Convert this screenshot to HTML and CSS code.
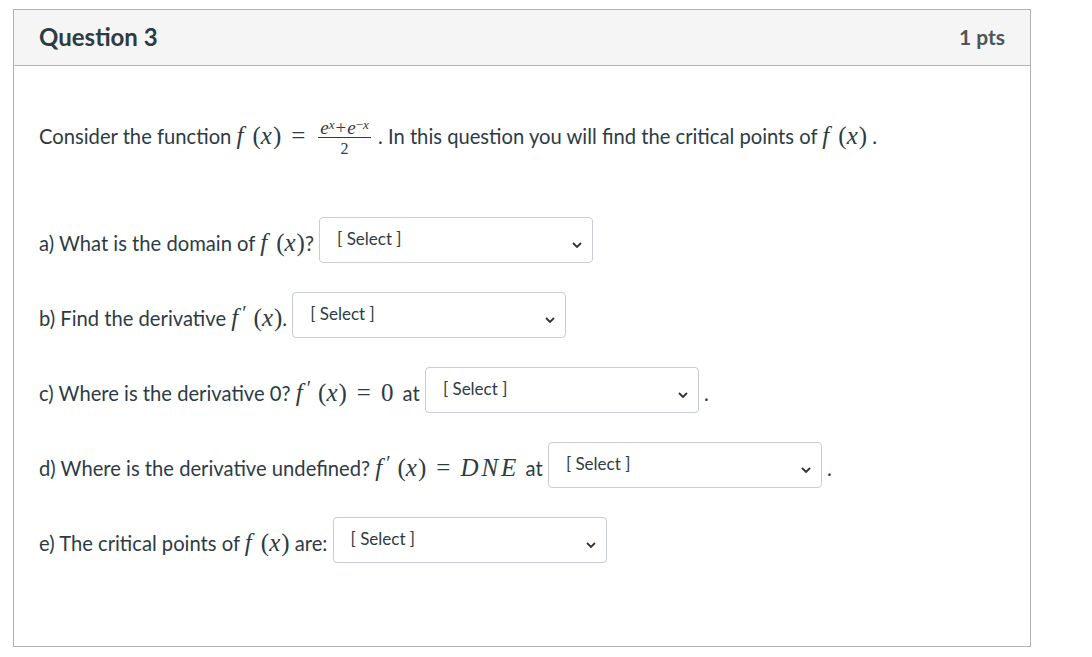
FILE: index.html
```html
<!DOCTYPE html>
<html lang="en">
<head>
  <meta charset="UTF-8" />
  <meta name="viewport" content="width=device-width, initial-scale=1.0"/>
  <title>Question 3</title>
  <link rel="stylesheet" href="styles.css">
</head>
<body>
  <div class="question">
    <div class="question-header">
      <h2 class="question-title">Question 3</h2>
      <span class="question-points">1 pts</span>
    </div>

    <div class="question-body">
      <p class="intro">
        Consider the function <span class="math"><i class="fn">f</i>(<i>x</i>)<span class="rel">=</span></span><span class="frac">
          <span class="num"><i>e</i><sup><i>x</i></sup><span class="op">+</span><i>e</i><sup>−<i>x</i></sup></span>
          <span class="den">2</span>
        </span> . In this question you will find the critical points of <span class="math"><i class="fn">f</i>(<i>x</i>)</span> .
      </p>

      <p class="answer-row">
        a) What is the domain of <span class="math"><i class="fn">f</i>(<i>x</i>)</span>?
        <span class="select"><span class="select-text">[ Select ]</span><svg class="chevron" width="10" height="7" viewBox="0 0 10 7"><polyline points="1,1 5,5 9,1" fill="none" stroke="#333" stroke-width="1.8"/></svg></span>
      </p>

      <p class="answer-row">
        b) Find the derivative <span class="math"><i>f</i><span class="prime">′</span>(<i>x</i>)</span>.
        <span class="select"><span class="select-text">[ Select ]</span><svg class="chevron" width="10" height="7" viewBox="0 0 10 7"><polyline points="1,1 5,5 9,1" fill="none" stroke="#333" stroke-width="1.8"/></svg></span>
      </p>

      <p class="answer-row">
        c) Where is the derivative 0? <span class="math math-gap"><i>f</i><span class="prime">′</span>(<i>x</i>)<span class="rel">=</span>0</span> at
        <span class="select select-end"><span class="select-text">[ Select ]</span><svg class="chevron" width="10" height="7" viewBox="0 0 10 7"><polyline points="1,1 5,5 9,1" fill="none" stroke="#333" stroke-width="1.8"/></svg></span>.
      </p>

      <p class="answer-row">
        d) Where is the derivative undefined? <span class="math"><i>f</i><span class="prime">′</span>(<i>x</i>)<span class="rel">=</span><i class="dne">DNE</i></span> at
        <span class="select select-end"><span class="select-text">[ Select ]</span><svg class="chevron" width="10" height="7" viewBox="0 0 10 7"><polyline points="1,1 5,5 9,1" fill="none" stroke="#333" stroke-width="1.8"/></svg></span>.
      </p>

      <p class="answer-row">
        e) The critical points of <span class="math"><i class="fn">f</i>(<i>x</i>)</span> are:
        <span class="select"><span class="select-text">[ Select ]</span><svg class="chevron" width="10" height="7" viewBox="0 0 10 7"><polyline points="1,1 5,5 9,1" fill="none" stroke="#333" stroke-width="1.8"/></svg></span>
      </p>
    </div>
  </div>
</body>
</html>
```

FILE: styles.css
```css
body {
  margin: 0;
  padding: 9px 0 0 13px;
  background: #fff;
  font-family: Lato, "Noto Sans", sans-serif;
  color: #2d3b45;
}

.question {
  width: 1018px;
  box-sizing: border-box;
  border: 1px solid #b3b3b3;
  padding-bottom: 83px;
}

.question-header {
  display: flex;
  justify-content: space-between;
  align-items: center;
  height: 56px;
  box-sizing: border-box;
  padding: 0 25px 3px;
  background: #f5f5f5;
  border-bottom: 1px solid #b3b3b3;
}

.question-title {
  margin: 0;
  font-size: 24px;
  font-weight: 700;
}

.question-points {
  font-size: 21px;
  font-weight: 700;
  color: #4f5559;
}

.question-body {
  padding: 0 25px;
  font-size: 20.2px;
}

.intro {
  margin: 50px 0 0;
  line-height: 40px;
}

.math {
  font-family: "Liberation Serif", "DejaVu Serif", serif;
  font-size: 25px;
  white-space: nowrap;
}

.math i {
  padding-right: 1px;
}

.math .fn {
  margin-right: 8px;
}

.math-gap {
  margin-right: 4px;
}

.prime {
  display: inline-block;
  margin: 0 7px 0 3px;
  font-size: 20px;
  vertical-align: 6px;
}

.rel {
  margin: 0 10px;
}

.dne {
  letter-spacing: 3px;
}

.frac {
  display: inline-flex;
  flex-direction: column;
  align-items: center;
  vertical-align: middle;
  font-family: "Liberation Serif", serif;
  font-size: 19px;
  line-height: 15px;
  margin: -4px 2px 0 3px;
}

.frac .num {
  padding: 0 2px 2px;
  border-bottom: 1px solid #2d3b45;
}

.frac .op {
  margin: 0 1px;
}

.frac sup {
  font-size: 13px;
  vertical-align: 5px;
}

.frac .den {
  padding-top: 3px;
  font-size: 16px;
}

.answer-row {
  margin: 29px 0 0;
}

.intro + .answer-row {
  margin-top: 61px;
}

.select {
  display: inline-flex;
  justify-content: space-between;
  align-items: flex-start;
  width: 274px;
  height: 46px;
  box-sizing: border-box;
  padding: 11px 10px 0 17px;
  border: 1px solid #c7cdd1;
  border-radius: 4px;
  vertical-align: 6px;
  font-size: 17px;
  line-height: 20px;
  background: #fff;
}

.select-end {
  margin-right: 5px;
}

.chevron {
  align-self: center;
}
```
